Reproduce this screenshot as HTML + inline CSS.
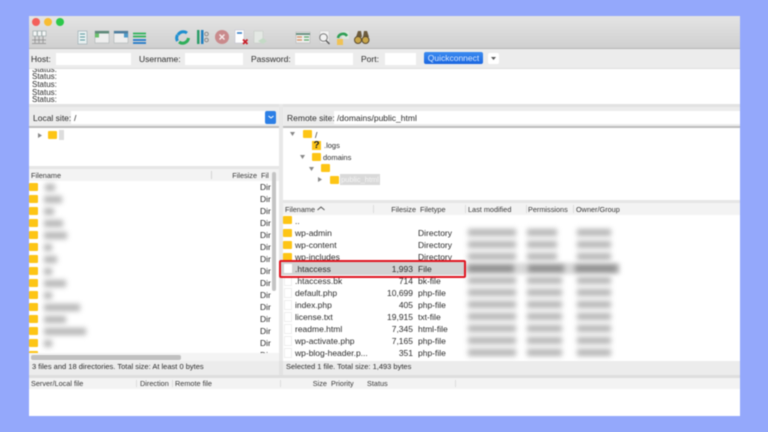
<!DOCTYPE html>
<html><head><meta charset="utf-8">
<style>
html,body{margin:0;padding:0;width:768px;height:432px;overflow:hidden;background:#94a8fb}
body{font-family:"Liberation Sans",sans-serif;color:#333;position:relative}
#w{position:absolute;left:0;top:0;width:768px;height:432px;filter:blur(.4px)}
.a,.t,.f,.d,.b{position:absolute}
.t{font-size:8.5px;line-height:12px;white-space:nowrap;color:#2c2c2c}
.h{font-size:7.3px;color:#383838}
.r{text-align:right}
.f{width:9px;height:8px;background:#fdc515;border-radius:1px}
.d{width:8px;height:10px;background:#fff;border:1px solid #eee;box-sizing:border-box}
.b{background:#8a8a8a;filter:blur(2.6px);height:7px}
.l{background:#b4b4b4;filter:blur(2.6px);height:7px;position:absolute}
.s{position:absolute;background:#fff;border:0}
svg{position:absolute;overflow:visible}
</style></head><body>
<div id="w">
<div class="a" style="left:29px;top:16px;width:711px;height:400px;background:#fff"></div>
<!-- title/toolbar -->
<div class="a" style="left:29px;top:16px;width:711px;height:33px;background:linear-gradient(#e4e4e4,#cfcfcf)"></div>
<div class="a" style="left:29px;top:48px;width:711px;height:1px;background:#b5b5b5"></div>
<div class="a" style="left:32px;top:18px;width:8px;height:8px;border-radius:50%;background:#f3605a"></div>
<div class="a" style="left:44px;top:18px;width:8px;height:8px;border-radius:50%;background:#f8bd33"></div>
<div class="a" style="left:56px;top:18px;width:8px;height:8px;border-radius:50%;background:#2cc84a"></div>
<svg style="left:0;top:0" width="768" height="60">
 <g fill="#f4f6f6" stroke="#93a3a3" stroke-width=".6"><rect x="33" y="31" width="4" height="5"/><rect x="37.500" y="31" width="4" height="5"/><rect x="42" y="31" width="4" height="5"/></g>
 <path d="M32 40h14M32 43.500h14M35 36v7M39 36v7M43 36v7" stroke="#8a8a8a" stroke-width=".7" fill="none"/>
 <rect x="78" y="31" width="9" height="13" fill="#e8f0f0" stroke="#9fb0b6" stroke-width=".7"/>
 <path d="M80 34h5M80 37h5M80 40h5" stroke="#5d9aa0" stroke-width="1"/>
 <rect x="95" y="31" width="14" height="12" fill="#eee" stroke="#a0aaaa" stroke-width=".5"/><rect x="95" y="31" width="14" height="2.500" fill="#5f8a7a"/><rect x="95" y="33.500" width="4" height="4" fill="#69c06a"/>
 <rect x="114" y="31" width="14" height="12" fill="#eee" stroke="#a0aaaa" stroke-width=".5"/><rect x="114" y="31" width="14" height="2.500" fill="#4e7e9f"/><rect x="124" y="33.500" width="4" height="4" fill="#4e9ac9"/>
 <path d="M133 33.500h13M133 36.500h13" stroke="#2fb35a" stroke-width="1.800"/><path d="M133 40h13M133 43h13" stroke="#1e78c8" stroke-width="1.800"/>
 <path d="M178 35a6 6 0 0 1 9-2" fill="none" stroke="#1f8fd0" stroke-width="3"/><path d="M188.500 38a6 6 0 0 1-9.500 4" fill="none" stroke="#2fae5a" stroke-width="3"/><path d="M177.500 41a6 6 0 0 1 0-6" fill="none" stroke="#1f8fd0" stroke-width="3"/>
 <rect x="197" y="30" width="2.500" height="14" fill="#2e9d6a"/><rect x="201" y="30" width="2.500" height="14" fill="#1f7fc0"/><circle cx="206.500" cy="34" r="1.800" fill="none" stroke="#888"/><circle cx="206.500" cy="40" r="1.800" fill="none" stroke="#888"/>
 <circle cx="222" cy="37" r="7" fill="#c98a8c"/><path d="M219.500 34.500l5 5m0-5l-5 5" stroke="#f4e8e8" stroke-width="1.500"/>
 <rect x="235" y="30" width="9" height="13" fill="#fff" stroke="#bbc" stroke-width=".5"/><path d="M237 33h5" stroke="#2b77c5" stroke-width="1.500"/><path d="M243 39.500l4.500 4.500m0-4.500l-4.500 4.500" stroke="#c8202a" stroke-width="1.800"/>
 <rect x="254" y="31" width="9" height="12" fill="#e4e8e4" stroke="#c5ccc5" stroke-width=".6"/><path d="M258 41l5-3 4 3-4 3z" fill="#c4dac6"/>
 <rect x="296" y="32" width="14" height="11" fill="#eee" stroke="#aaa" stroke-width=".5"/><path d="M296 34h14" stroke="#5f8a78" stroke-width="1.800"/><path d="M297 37h5M297 40h5" stroke="#d58a5a" stroke-width="1.200"/><path d="M304 37h5M304 40h5" stroke="#5aa86a" stroke-width="1.200"/>
 <rect x="320" y="31" width="9" height="12" fill="#f2f2f2" stroke="#c5c5c5" stroke-width=".5"/><circle cx="323.500" cy="37.500" r="3.800" fill="none" stroke="#777" stroke-width="1"/><path d="M326 40.500l3.500 3.500" stroke="#555" stroke-width="1.300"/>
 <rect x="342" y="31" width="7" height="8" fill="#dfe8df"/><path d="M338 38a5 5 0 0 1 9-2" fill="none" stroke="#2f9e55" stroke-width="2.600"/><rect x="337" y="39" width="6" height="6" fill="#f0c255"/>
 <path d="M356 37l2-6h3l1 6zM363 37l1-6h3l2 6z" fill="#6c5b3e"/><circle cx="358" cy="40" r="3.500" fill="#c9a64a" stroke="#5a4a30"/><circle cx="365.500" cy="40" r="3.500" fill="#c9a64a" stroke="#5a4a30"/>
</svg>
<!-- quickconnect bar -->
<div class="a" style="left:29px;top:49px;width:711px;height:19px;background:#ececec;border-bottom:1px solid #ddd"></div>
<div class="t" style="left:31px;top:53px">Host:</div>
<div class="s" style="left:56px;top:53px;width:75px;height:12px"></div>
<div class="t" style="left:139px;top:53px">Username:</div>
<div class="s" style="left:185px;top:53px;width:58px;height:12px"></div>
<div class="t" style="left:251px;top:53px">Password:</div>
<div class="s" style="left:295px;top:53px;width:58px;height:12px"></div>
<div class="t" style="left:361px;top:53px">Port:</div>
<div class="s" style="left:385px;top:53px;width:31px;height:12px"></div>
<div class="a" style="left:424px;top:52px;width:59px;height:12px;border-radius:2px;background:linear-gradient(#3b8bf0,#1a66e0);color:#d4e6ff;font-size:8.500px;line-height:12px;text-align:center">Quickconnect</div>
<div class="a" style="left:488px;top:53px;width:11px;height:11px;background:#fff;border-radius:2px"></div>
<svg style="left:491px;top:57px" width="6" height="4"><path d="M0 0h5l-2.500 3z" fill="#555"/></svg>
<!-- log -->
<div class="a" style="left:29px;top:69px;width:200px;height:5px;overflow:hidden"><div class="t" style="left:3px;top:-5.500px;font-size:8px">Status:</div></div>
<div class="t" style="left:32px;top:71px;font-size:8px">Status:</div>
<div class="t" style="left:32px;top:79px;font-size:8px">Status:</div>
<div class="t" style="left:32px;top:86.500px;font-size:8px">Status:</div>
<div class="t" style="left:32px;top:94px;font-size:8px">Status:</div>
<!-- site bars -->
<div class="a" style="left:29px;top:104px;width:711px;height:24px;background:#ececec"></div>
<div class="a" style="left:29px;top:104px;width:711px;height:3px;background:#e2e2e2"></div>
<div class="t" style="left:33px;top:112px">Local site:</div>
<div class="s" style="left:71px;top:111px;width:195px;height:13px"></div>
<div class="t" style="left:74px;top:112px">/</div>
<div class="a" style="left:265px;top:111px;width:11px;height:13px;border-radius:2px;background:#2c7fe6"></div>
<svg style="left:268px;top:115px" width="6" height="6"><path d="M.5 1l2.500 2 2.500-2" fill="none" stroke="#fff" stroke-width="1"/></svg>
<div class="t" style="left:287px;top:112px">Remote site:</div>
<div class="s" style="left:334px;top:111px;width:406px;height:13px"></div>
<div class="t" style="left:337px;top:112px">/domains/public_html</div>
<div class="a" style="left:29px;top:126px;width:711px;height:2px;background:#bdbdbd"></div>
<!-- gutters -->
<div class="a" style="left:279px;top:104px;width:4px;height:272px;background:#e8e8e8"></div>
<div class="a" style="left:29px;top:166px;width:250px;height:3px;background:#e6e6e6"></div>
<div class="a" style="left:283px;top:200px;width:457px;height:3px;background:#e6e6e6"></div>
<!-- local tree -->
<svg style="left:38px;top:133px" width="5" height="6"><path d="M0 0l4 2.500-4 2.500z" fill="#888"/></svg>
<div class="f" style="left:48px;top:131px"></div>
<div class="a" style="left:59px;top:130px;width:5px;height:10px;background:#ddd"></div>
<!-- local header -->
<div class="a" style="left:29px;top:169px;width:250px;height:12px;background:#f3f3f3"></div>
<div class="t h" style="left:31px;top:169.500px">Filename</div>
<div class="a" style="left:211px;top:171px;width:1px;height:8px;background:#d5d5d5"></div>
<div class="t h r" style="left:210px;top:169.500px;width:47px">Filesize</div>
<div class="t h" style="left:261px;top:169.500px">Fil</div>
<div class="a" style="left:272px;top:172px;width:4px;height:119px;background:#c4c4c4;border-radius:2px"></div>
<!-- local rows -->
<div class="f" style="left:29px;top:183px"></div><div class="l" style="left:45px;top:184px;width:10px"></div><div class="t" style="left:260px;top:180.500px">Dir</div>
<div class="f" style="left:29px;top:195px"></div><div class="l" style="left:44px;top:196px;width:18px"></div><div class="t" style="left:260px;top:192.500px">Dir</div>
<div class="f" style="left:29px;top:207px"></div><div class="l" style="left:44px;top:208px;width:10px"></div><div class="t" style="left:260px;top:204.500px">Dir</div>
<div class="f" style="left:29px;top:219px"></div><div class="l" style="left:44px;top:220px;width:19px"></div><div class="t" style="left:260px;top:216.500px">Dir</div>
<div class="f" style="left:29px;top:231px"></div><div class="l" style="left:44px;top:232px;width:23px"></div><div class="t" style="left:260px;top:228.500px">Dir</div>
<div class="f" style="left:29px;top:243px"></div><div class="l" style="left:44px;top:244px;width:8px"></div><div class="t" style="left:260px;top:240.500px">Dir</div>
<div class="f" style="left:29px;top:255px"></div><div class="l" style="left:44px;top:256px;width:13px"></div><div class="t" style="left:260px;top:252.500px">Dir</div>
<div class="f" style="left:29px;top:267px"></div><div class="l" style="left:44px;top:268px;width:8px"></div><div class="t" style="left:260px;top:264.500px">Dir</div>
<div class="f" style="left:29px;top:279px"></div><div class="l" style="left:44px;top:280px;width:22px"></div><div class="t" style="left:260px;top:276.500px">Dir</div>
<div class="f" style="left:29px;top:291px"></div><div class="l" style="left:44px;top:292px;width:8px"></div><div class="t" style="left:260px;top:288.500px">Dir</div>
<div class="f" style="left:29px;top:303px"></div><div class="l" style="left:44px;top:304px;width:36px"></div><div class="t" style="left:260px;top:300.500px">Dir</div>
<div class="f" style="left:29px;top:315px"></div><div class="l" style="left:44px;top:316px;width:22px"></div><div class="t" style="left:260px;top:312.500px">Dir</div>
<div class="f" style="left:29px;top:327px"></div><div class="l" style="left:44px;top:328px;width:42px"></div><div class="t" style="left:260px;top:324.500px">Dir</div>
<div class="f" style="left:29px;top:339px"></div><div class="l" style="left:44px;top:340px;width:8px"></div><div class="t" style="left:260px;top:336.500px">Dir</div>
<div class="f" style="left:29px;top:351px;height:3px"></div><div class="t" style="left:260px;top:348.500px;height:6px;overflow:hidden">Dir</div>
<div class="a" style="left:29px;top:353px;width:250px;height:8px;background:#f4f4f4"></div>
<div class="a" style="left:31px;top:355px;width:150px;height:5px;background:#c0c0c0;border-radius:2px"></div>
<!-- remote tree -->
<svg style="left:290px;top:132px" width="6" height="5"><path d="M0 0h5l-2.500 4z" fill="#888"/></svg>
<div class="f" style="left:303px;top:130px"></div>
<div class="t" style="left:315px;top:128.500px">/</div>
<div class="a" style="left:312px;top:141px;width:9px;height:9px;background:#fdc515;color:#222;font-weight:bold;font-size:10px;line-height:9px;text-align:center">?</div>
<div class="t" style="left:324px;top:140px;font-size:7.500px">.logs</div>
<svg style="left:300px;top:155px" width="6" height="5"><path d="M0 0h5l-2.500 4z" fill="#888"/></svg>
<div class="f" style="left:312px;top:153px"></div>
<div class="t" style="left:323px;top:152px;font-size:7.500px">domains</div>
<svg style="left:309px;top:167px" width="6" height="5"><path d="M0 0h5l-2.500 4z" fill="#888"/></svg>
<div class="f" style="left:321px;top:164px"></div>
<svg style="left:318px;top:177px" width="5" height="6"><path d="M0 0l4 2.500-4 2.500z" fill="#888"/></svg>
<div class="f" style="left:330px;top:176px"></div>
<div class="a" style="left:340px;top:174px;width:40px;height:11px;background:#d9d9d9"></div>
<div class="t" style="left:341px;top:173.500px;font-size:7.500px;color:#f5f5f5">public_html</div>
<!-- remote header -->
<div class="a" style="left:283px;top:203px;width:457px;height:12px;background:#f3f3f3"></div>
<div class="t h" style="left:285px;top:203.500px">Filename</div>
<svg style="left:317px;top:206px" width="8" height="5"><path d="M.5 4l3.500-3 3.500 3" fill="none" stroke="#555" stroke-width="1"/></svg>
<div class="a" style="left:373px;top:205px;width:1px;height:8px;background:#ddd"></div>
<div class="t h r" style="left:380px;top:203.500px;width:36px">Filesize</div>
<div class="t h" style="left:420px;top:203.500px">Filetype</div>
<div class="a" style="left:465px;top:205px;width:1px;height:8px;background:#ddd"></div>
<div class="t h" style="left:468px;top:203.500px">Last modified</div>
<div class="a" style="left:526px;top:205px;width:1px;height:8px;background:#ddd"></div>
<div class="t h" style="left:528px;top:203.500px">Permissions</div>
<div class="a" style="left:573px;top:205px;width:1px;height:8px;background:#ddd"></div>
<div class="t h" style="left:576px;top:203.500px">Owner/Group</div>
<!-- remote rows -->
<div class="f" style="left:283px;top:216px"></div><div class="t" style="left:295px;top:214.500px">..</div>
<div class="f" style="left:283px;top:229px"></div><div class="t" style="left:295px;top:226.500px">wp-admin</div><div class="t" style="left:418px;top:226.500px">Directory</div>
<div class="f" style="left:283px;top:241px"></div><div class="t" style="left:295px;top:238.500px">wp-content</div><div class="t" style="left:418px;top:238.500px">Directory</div>
<div class="f" style="left:283px;top:253px"></div><div class="t" style="left:295px;top:250.500px">wp-includes</div><div class="t" style="left:418px;top:250.500px">Directory</div>
<div class="a" style="left:280px;top:262px;width:186px;height:13px;background:#d2d2d2"></div>
<div class="a" style="left:284px;top:264px;width:8px;height:9px;background:#fff"></div>
<div class="t" style="left:295px;top:262.500px">.htaccess</div><div class="t r" style="left:380px;top:262.500px;width:33px">1,993</div><div class="t" style="left:418px;top:262.500px">File</div>
<div class="d" style="left:284px;top:276px"></div><div class="t" style="left:295px;top:274.500px">.htaccess.bk</div><div class="t r" style="left:380px;top:274.500px;width:33px">714</div><div class="t" style="left:418px;top:274.500px">bk-file</div>
<div class="d" style="left:284px;top:288px"></div><div class="t" style="left:295px;top:286.500px">default.php</div><div class="t r" style="left:380px;top:286.500px;width:33px">10,699</div><div class="t" style="left:418px;top:286.500px">php-file</div>
<div class="d" style="left:284px;top:300px"></div><div class="t" style="left:295px;top:298.500px">index.php</div><div class="t r" style="left:380px;top:298.500px;width:33px">405</div><div class="t" style="left:418px;top:298.500px">php-file</div>
<div class="d" style="left:284px;top:312px"></div><div class="t" style="left:295px;top:310.500px">license.txt</div><div class="t r" style="left:380px;top:310.500px;width:33px">19,915</div><div class="t" style="left:418px;top:310.500px">txt-file</div>
<div class="d" style="left:284px;top:324px"></div><div class="t" style="left:295px;top:322.500px">readme.html</div><div class="t r" style="left:380px;top:322.500px;width:33px">7,345</div><div class="t" style="left:418px;top:322.500px">html-file</div>
<div class="d" style="left:284px;top:336px"></div><div class="t" style="left:295px;top:334.500px">wp-activate.php</div><div class="t r" style="left:380px;top:334.500px;width:33px">7,165</div><div class="t" style="left:418px;top:334.500px">php-file</div>
<div class="d" style="left:284px;top:348px"></div><div class="t" style="left:295px;top:346.500px">wp-blog-header.p...</div><div class="t r" style="left:380px;top:346.500px;width:33px">351</div><div class="t" style="left:418px;top:346.500px">php-file</div>
<!-- blurred columns -->
<div class="l" style="left:468px;top:229px;width:48px"></div><div class="l" style="left:527px;top:229px;width:30px"></div><div class="l" style="left:577px;top:229px;width:34px"></div>
<div class="l" style="left:468px;top:241px;width:48px"></div><div class="l" style="left:527px;top:241px;width:30px"></div><div class="l" style="left:577px;top:241px;width:34px"></div>
<div class="l" style="left:468px;top:253px;width:48px"></div><div class="l" style="left:527px;top:253px;width:30px"></div><div class="l" style="left:577px;top:253px;width:34px"></div>
<div class="a" style="left:466px;top:263px;width:154px;height:11px;background:#d8d8d8;filter:blur(2px)"></div>
<div class="b" style="left:468px;top:265px;width:46px"></div><div class="b" style="left:528px;top:265px;width:36px"></div><div class="b" style="left:575px;top:265px;width:42px"></div>
<div class="l" style="left:468px;top:277px;width:48px"></div><div class="l" style="left:527px;top:277px;width:35px"></div><div class="l" style="left:577px;top:277px;width:34px"></div>
<div class="l" style="left:468px;top:289px;width:48px"></div><div class="l" style="left:527px;top:289px;width:35px"></div><div class="l" style="left:577px;top:289px;width:34px"></div>
<div class="l" style="left:468px;top:301px;width:48px"></div><div class="l" style="left:527px;top:301px;width:35px"></div><div class="l" style="left:577px;top:301px;width:34px"></div>
<div class="l" style="left:468px;top:313px;width:48px"></div><div class="l" style="left:527px;top:313px;width:35px"></div><div class="l" style="left:577px;top:313px;width:34px"></div>
<div class="l" style="left:468px;top:325px;width:48px"></div><div class="l" style="left:527px;top:325px;width:35px"></div><div class="l" style="left:577px;top:325px;width:34px"></div>
<div class="l" style="left:468px;top:337px;width:48px"></div><div class="l" style="left:527px;top:337px;width:35px"></div><div class="l" style="left:577px;top:337px;width:34px"></div>
<div class="l" style="left:468px;top:349px;width:48px"></div><div class="l" style="left:527px;top:349px;width:35px"></div><div class="l" style="left:577px;top:349px;width:34px"></div>
<!-- red highlight -->
<div class="a" style="left:279px;top:260px;width:187px;height:18px;border:2px solid #e0141f;border-radius:2px;box-sizing:border-box"></div>
<!-- status bars -->
<div class="a" style="left:29px;top:361px;width:711px;height:15px;background:#ececec"></div>
<div class="a" style="left:279px;top:361px;width:4px;height:15px;background:#e2e2e2"></div>
<div class="t" style="left:32px;top:360.500px;font-size:7.500px">3 files and 18 directories. Total size: At least 0 bytes</div>
<div class="t" style="left:286px;top:360.500px;font-size:7.500px">Selected 1 file. Total size: 1,493 bytes</div>
<div class="a" style="left:29px;top:375px;width:711px;height:3px;background:#dedede"></div>
<!-- queue header -->
<div class="a" style="left:29px;top:378px;width:711px;height:11px;background:#f3f3f3"></div>
<div class="t h" style="left:31px;top:377.500px">Server/Local file</div>
<div class="t h" style="left:140px;top:377.500px">Direction</div>
<div class="t h" style="left:175px;top:377.500px">Remote file</div>
<div class="t h r" style="left:290px;top:377.500px;width:37px">Size</div>
<div class="t h" style="left:331px;top:377.500px">Priority</div>
<div class="t h" style="left:367px;top:377.500px">Status</div>
<div class="a" style="left:136px;top:380px;width:1px;height:7px;background:#ddd"></div>
<div class="a" style="left:172px;top:380px;width:1px;height:7px;background:#ddd"></div>
<div class="a" style="left:280px;top:380px;width:1px;height:7px;background:#ddd"></div>
<div class="a" style="left:455px;top:380px;width:1px;height:7px;background:#ddd"></div>
</div>
</body></html>
